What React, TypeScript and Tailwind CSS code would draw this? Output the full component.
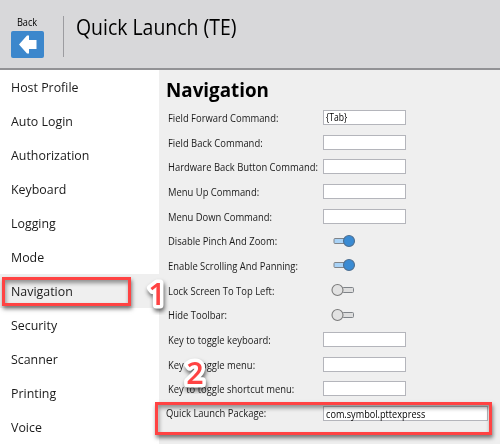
import clsx from "clsx";

type Row = {
  label: string;
  kind: "text" | "toggle";
  value?: string;
  on?: boolean;
  wide?: boolean;
};

const sections = [
  "Host Profile",
  "Auto Login",
  "Authorization",
  "Keyboard",
  "Logging",
  "Mode",
  "Navigation",
  "Security",
  "Scanner",
  "Printing",
  "Voice",
];

const rows: Row[] = [
  { label: "Field Forward Command:", kind: "text", value: "{Tab}" },
  { label: "Field Back Command:", kind: "text" },
  { label: "Hardware Back Button Command:", kind: "text" },
  { label: "Menu Up Command:", kind: "text" },
  { label: "Menu Down Command:", kind: "text" },
  { label: "Disable Pinch And Zoom:", kind: "toggle", on: true },
  { label: "Enable Scrolling And Panning:", kind: "toggle", on: true },
  { label: "Lock Screen To Top Left:", kind: "toggle" },
  { label: "Hide Toolbar:", kind: "toggle" },
  { label: "Key to toggle keyboard:", kind: "text" },
  { label: "Key to toggle menu:", kind: "text" },
  { label: "Key to toggle shortcut menu:", kind: "text" },
  { label: "Quick Launch Package:", kind: "text", value: "com.symbol.pttexpress", wide: true },
];

function Toggle({ on }: { on?: boolean }) {
  return (
    <svg width="25" height="14" viewBox="0 0 25 14" className="ml-2 block" aria-hidden>
      <rect
        x={on ? 3 : 11.5}
        y="4.5"
        width={on ? 12 : 11}
        height="5"
        rx="1"
        fill={on ? "#a9d3f7" : "#dedede"}
        stroke="#808489"
      />
      <circle
        cx={on ? 18 : 6.5}
        cy="7"
        r="5.5"
        fill={on ? "#3a8bd3" : "#e2e2e2"}
        stroke={on ? "#4e6f90" : "#7c7c7c"}
        strokeWidth="1.1"
      />
    </svg>
  );
}

function Callout({ digit, className }: { digit: string; className: string }) {
  return (
    <svg width="40" height="44" viewBox="0 0 40 44" className={clsx("absolute", className)} aria-hidden>
      <text
        x="20"
        y="34"
        textAnchor="middle"
        fontSize="30.5"
        fontWeight="600"
        fill="#ff4343"
        stroke="#fff"
        strokeWidth="7"
        strokeLinejoin="round"
        paintOrder="stroke"
        className="drop-shadow-[1px_3px_2px_rgba(0,0,0,0.6)]"
      >
        {digit}
      </text>
    </svg>
  );
}

export default function App() {
  return (
    <div className="relative flex h-[444px] w-[500px] flex-col overflow-hidden bg-[#efefef] font-['Open_Sans','Noto_Sans',sans-serif] text-black">
      <header className="flex h-[70px] shrink-0 border-b-2 border-[#929295] bg-[#d8d8da]">
        <div className="flex w-[55px] flex-col items-center pt-4">
          <span className="scale-x-[0.92] text-[10px] leading-3">Back</span>
          <button
            type="button"
            aria-label="Back"
            className="mt-[3px] flex h-[27px] w-[33px] items-center justify-center rounded-[2px] bg-[#3c87cc]"
          >
            <svg width="18" height="19" viewBox="0 0 18 19" fill="#fff" aria-hidden>
              <path d="M0 9.5 8 .5H10V5h7.5v9H10v4.5H8z" />
            </svg>
          </button>
        </div>
        <div className="mt-4 ml-2 h-[41px] w-px bg-[#9c9ca0]" />
        <h1 className="mt-3 ml-3 origin-left scale-x-[0.925] text-[21px] leading-[30px] whitespace-nowrap">
          Quick Launch (TE)
        </h1>
      </header>

      <div className="flex min-h-0 flex-1">
        <nav className="w-[159px] shrink-0 bg-white">
          {sections.map((label) => (
            <div
              key={label}
              className={clsx(
                "flex h-[34px] items-center pt-[2px] pl-[11px] text-[13px] text-[#1a1a1a]",
                label === "Navigation" && "bg-[#efefef]"
              )}
            >
              <span className="origin-left scale-x-[0.953]">{label}</span>
            </div>
          ))}
        </nav>

        <main className="min-w-0 flex-1 pl-[7px]">
          <h2 className="origin-left scale-x-[0.94] pt-[5px] text-[20px] leading-[30px] font-bold">Navigation</h2>
          <div>
            {rows.map(({ label, kind, value, on, wide }) => (
              <div key={label} className="flex h-[24.7px] items-center">
                <div
                  className={clsx(
                    "flex w-[157px] shrink-0 text-[10px] whitespace-nowrap text-[#1a1a1a]",
                    wide ? "pb-px" : "pt-[2px] pl-[2px]"
                  )}
                >
                  <span className="origin-left scale-x-[0.942]">{label}</span>
                </div>
                {kind === "toggle" ? (
                  <Toggle on={on} />
                ) : (
                  <div
                    className={clsx(
                      "flex h-[15px] items-center border border-[#b4b5bb] bg-white pt-px pl-[2px] text-[10px]",
                      wide ? "w-[165px]" : "w-[83px]"
                    )}
                  >
                    {value && (
                      <span className={clsx("origin-left", wide ? "scale-x-[0.915]" : "scale-x-[0.86]")}>
                        {value}
                      </span>
                    )}
                  </div>
                )}
              </div>
            ))}
          </div>
        </main>
      </div>

      <div className="absolute top-[277px] left-[2px] h-[29px] w-[129px] border-3 border-[#ff4343] shadow-[1px_3px_4px_rgba(0,0,0,0.5),inset_1px_3px_4px_rgba(0,0,0,0.4)]" />
      <div className="absolute top-[402px] left-[155px] h-[33px] w-[337px] border-3 border-[#ff4343] shadow-[1px_3px_4px_rgba(0,0,0,0.5),inset_1px_3px_4px_rgba(0,0,0,0.4)]" />
      <Callout digit="1" className="top-[271px] left-[137px]" />
      <Callout digit="2" className="top-[350px] left-[175px]" />
    </div>
  );
}
